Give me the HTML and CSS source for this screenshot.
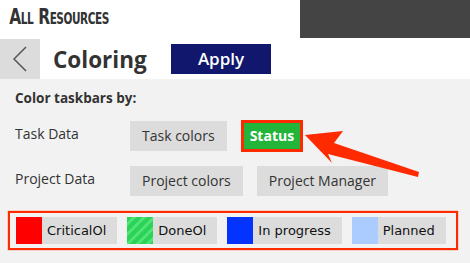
FILE: index.html
```html
<!DOCTYPE html>
<html lang="en">
<head>
  <meta charset="UTF-8">
  <title>Coloring</title>
  <link rel="stylesheet" href="styles.css">
</head>
<body>

  <div class="header">
    <div class="title">All Resources</div>
    <div class="dark-block"></div>
  </div>

  <div class="toolbar">
    <div class="back">
      <svg width="14" height="26" viewBox="0 0 14 26"><polyline points="13,1 1,13 13,25" fill="none" stroke="#555" stroke-width="1.5"/></svg>
    </div>
    <h2>Coloring</h2>
    <button class="apply">Apply</button>
  </div>

  <div class="panel">
    <div class="heading">Color taskbars by:</div>

    <div class="row">
      <span class="label">Task Data</span>
      <span class="opt">Task colors</span>
      <span class="opt active">Status</span>
    </div>
    <div class="row">
      <span class="label">Project Data</span>
      <span class="opt">Project colors</span>
      <span class="opt">Project Manager</span>
    </div>

    <div class="legend">
      <div class="item"><span class="swatch critical"></span><span class="name">CriticalOl</span></div>
      <div class="item"><span class="swatch done"></span><span class="name">DoneOl</span></div>
      <div class="item"><span class="swatch progress"></span><span class="name">In progress</span></div>
      <div class="item"><span class="swatch planned"></span><span class="name">Planned</span></div>
    </div>

    <!-- callout arrow -->
    <svg class="arrow" width="125" height="60" viewBox="0 0 125 60">
      <polygon points="5,10 43,6 34,18 119,47 118,52 28,29 32,38" fill="#ff2a00"/>
    </svg>
  </div>

</body>
</html>
```

FILE: styles.css
```css
body {
  margin: 0;
  font-family: "Open Sans", sans-serif;
  color: #333;
  background: #f2f2f2;
}

.header {
  display: flex;
  justify-content: space-between;
  height: 39px;
  background: #fff;
}

.title {
  font-family: "Liberation Sans Narrow", "DejaVu Sans Condensed", sans-serif;
  font-variant: small-caps;
  font-weight: 700;
  font-size: 22px;
  color: #333;
  padding: 4px 0 0 12px;
  letter-spacing: -0.6px;
  transform: scaleX(0.78);
  transform-origin: left;
}

.dark-block {
  width: 170px;
  height: 38px;
  background: #444;
}

.toolbar {
  display: flex;
  align-items: center;
  height: 40px;
  background: #fff;
}

.back {
  width: 40px;
  height: 40px;
  background: #dcdcdc;
  display: flex;
  align-items: center;
  justify-content: center;
}

.toolbar h2 {
  margin: 0 0 0 13px;
  font-size: 22.5px;
  font-weight: 700;
  color: #333;
  width: 118px;
}

.apply {
  width: 100px;
  height: 30px;
  margin-top: -1px;
  background: #10176c;
  color: #fff;
  border: none;
  font-family: "Open Sans", sans-serif;
  font-size: 17px;
  font-weight: 600;
  padding: 0;
}

.panel {
  position: relative;
  padding: 10px 0 0 15px;
  height: 174px;
}

.heading {
  font-weight: 700;
  font-size: 13.5px;
  margin-bottom: 14px;
}

.row {
  display: flex;
  align-items: center;
  height: 30px;
  margin-bottom: 15px;
  font-size: 14px;
}

.row .label {
  width: 115px;
  margin-top: -6px;
}

.opt {
  display: inline-block;
  background: #dcdcdc;
  height: 30px;
  line-height: 30px;
  padding: 0 12px;
  margin-right: 14px;
}

.opt.active {
  background: #22b53a;
  color: #fff;
  font-weight: 700;
  height: 26px;
  line-height: 26px;
  padding: 0 6px;
  border: 3px solid #ff2a00;
}

.legend {
  display: flex;
  gap: 10px;
  margin: 0 0 0 -7px;
  width: 434px;
  padding: 4px 6px;
  border: 2.5px solid #ff2a00;
  box-shadow: 0 0 1px #ff2a00;
  font-family: "DejaVu Sans", sans-serif;
  font-size: 13px;
  color: #111;
}

.item {
  display: flex;
  flex-shrink: 0;
  height: 27px;
  background: #dcdcdc;
}

.swatch {
  width: 26px;
  height: 27px;
}

.name {
  line-height: 27px;
  white-space: nowrap;
  padding: 0 11px 0 5px;
}

.critical { background: #ff0000; }
.done { background: repeating-linear-gradient(135deg, #2bd457 0 4px, #52e27a 4px 7px); }
.progress { background: #0433ff; }
.planned { background: #aaccff; }

.arrow {
  position: absolute;
  left: 300px;
  top: 46px;
}
```
